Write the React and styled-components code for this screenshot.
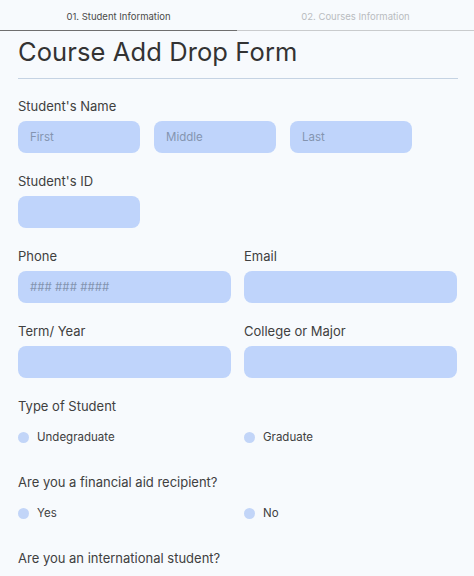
import React from "react";
import styled, { createGlobalStyle } from "styled-components";

const Global = createGlobalStyle`
  html, body { margin: 0; padding: 0; background: #f7fafd; }
  body { font-family: "Inter", "Noto Sans", sans-serif; color: #3f3f3f; }
  * { box-sizing: border-box; }
`;

const Page = styled.div`
  width: 474px;
  height: 576px;
  overflow: hidden;
  background: #f7fafd;
`;

const TabBar = styled.div`
  display: grid;
  grid-template-columns: 237px 1fr;
  height: 31px;
`;

const Tab = styled.div`
  display: flex;
  align-items: center;
  justify-content: center;
  padding-top: 2px;
  font-size: 9.5px;
  color: ${(p) => (p.$active ? "#4a4a4a" : "#b9bcc0")};
  border-bottom: 1.5px solid ${(p) => (p.$active ? "#6f6f6f" : "#c9cbcd")};
`;

const Content = styled.div`
  padding: 0 16px 0 18px;
`;

const Title = styled.h1`
  margin: 5px 0 0;
  font-size: 25.5px;
  line-height: 32px;
  font-weight: 400;
  color: #333;
  letter-spacing: 0.1px;
`;

const Divider = styled.hr`
  margin: 10px 0 0;
  border: 0;
  border-top: 1px solid #c5d3e3;
`;

const Form = styled.div`
  display: flex;
  flex-direction: column;
  gap: 20px;
  margin-top: 19px;
`;

const Field = styled.div`
  display: flex;
  flex-direction: column;
  padding-bottom: ${(p) => (p.$radio ? "7px" : "0")};
`;

const Label = styled.div`
  font-size: 13px;
  line-height: 16px;
  color: #404040;
  margin-bottom: ${(p) => (p.$radio ? "13px" : "7px")};
`;

const Row = styled.div`
  display: grid;
  grid-template-columns: ${(p) => p.$cols};
  column-gap: ${(p) => p.$gap || "14px"};
`;

const Input = styled.div`
  height: 32px;
  border-radius: 8px;
  background: #bfd4fb;
  display: flex;
  align-items: center;
  padding-left: 12px;
  font-size: 11.5px;
  color: #8494b0;
`;

const RadioRow = styled.div`
  display: grid;
  grid-template-columns: 226px 1fr;
  height: 20px;
`;

const Radio = styled.div`
  display: flex;
  align-items: center;
  gap: 8px;
  font-size: 11.5px;
  color: #404040;
`;

const Dot = styled.span`
  width: 11px;
  height: 11px;
  border-radius: 50%;
  background: #c2d5f8;
`;

const RadioField = ({ label, options }) => (
  <Field $radio>
    <Label $radio>{label}</Label>
    <RadioRow>
      {options.map((o) => (
        <Radio key={o}>
          <Dot />
          {o}
        </Radio>
      ))}
    </RadioRow>
  </Field>
);

export default function App() {
  return (
    <Page>
      <Global />
      <TabBar>
        <Tab $active>01. Student Information</Tab>
        <Tab>02. Courses Information</Tab>
      </TabBar>
      <Content>
        <Title>Course Add Drop Form</Title>
        <Divider />
        <Form>
          <Field>
            <Label>Student's Name</Label>
            <Row $cols="122px 122px 122px">
              <Input>First</Input>
              <Input>Middle</Input>
              <Input>Last</Input>
            </Row>
          </Field>
          <Field>
            <Label>Student's ID</Label>
            <Row $cols="122px">
              <Input />
            </Row>
          </Field>
          <Row $cols="213px 213px" $gap="13px">
            <Field>
              <Label>Phone</Label>
              <Input>### ### ####</Input>
            </Field>
            <Field>
              <Label>Email</Label>
              <Input />
            </Field>
          </Row>
          <Row $cols="213px 213px" $gap="13px">
            <Field>
              <Label>Term/ Year</Label>
              <Input />
            </Field>
            <Field>
              <Label>College or Major</Label>
              <Input />
            </Field>
          </Row>
          <RadioField label="Type of Student" options={["Undegraduate", "Graduate"]} />
          <RadioField label="Are you a financial aid recipient?" options={["Yes", "No"]} />
          <Field>
            <Label>Are you an international student?</Label>
          </Field>
        </Form>
      </Content>
    </Page>
  );
}
